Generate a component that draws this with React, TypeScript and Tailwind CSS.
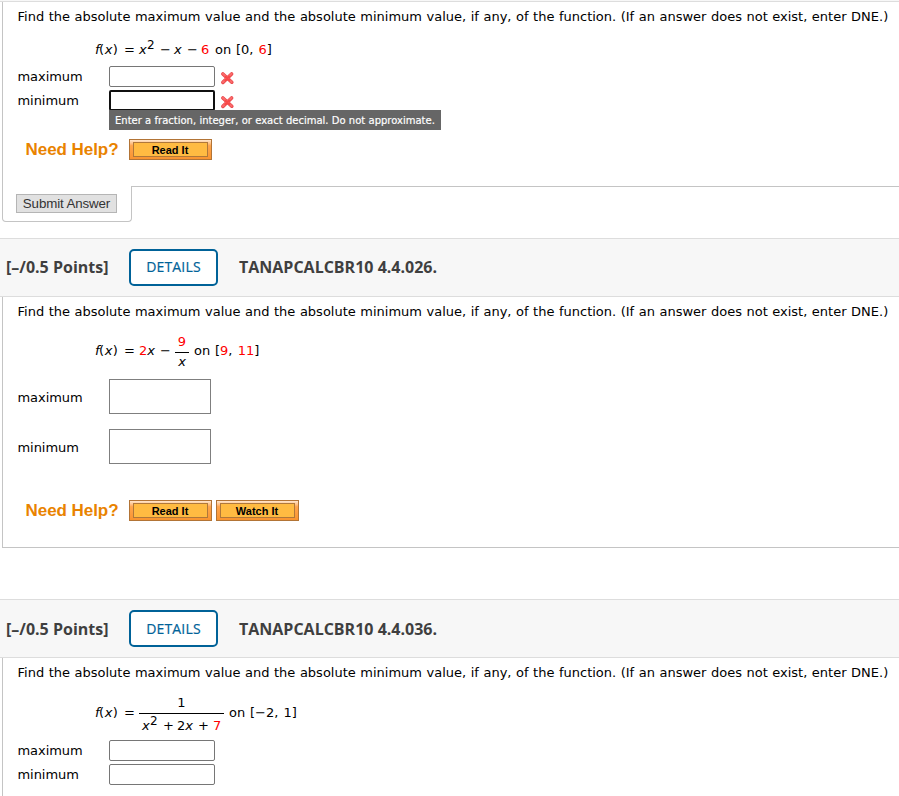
import type { ReactNode } from "react";

const VERDANA = "font-['Verdana','DejaVu_Sans',sans-serif]";

function Token({ w, children, className = "" }: { w: string; children: ReactNode; className?: string }) {
  return <span className={`block shrink-0 whitespace-pre ${w} ${className}`}>{children}</span>;
}

function Prompt() {
  return (
    <p className="ml-[0.5px] h-4 w-[872px] whitespace-nowrap text-[13px] leading-4 [word-spacing:0.4px]">
      Find the absolute maximum value and the absolute minimum value, if any, of the function. (If an answer does not
      exist, enter DNE.)
    </p>
  );
}

function FunctionOfX() {
  return (
    <>
      <Token w="w-[29px]">
        <i>f</i><span className="ml-[-0.5px]">(</span><i className="ml-[0.5px]">x</i><span className="ml-[0.5px]">)</span>
      </Token>
      <Token w="w-[15px]">=</Token>
    </>
  );
}

function Squared() {
  return (
    <>
      <Token w="w-[8px]"><i>x</i></Token>
      <Token w="w-[13px]" className="-mt-[5px] text-[12px]">2</Token>
    </>
  );
}

function Cross() {
  return (
    <svg className="ml-[5px] mt-1 h-[16px] w-[15px]" viewBox="0 0 15 16">
      <path d="M2.9 4 L11.8 12.2 M11.6 4 L2.9 12.4" stroke="#e8474b" strokeWidth="3.6" strokeLinecap="round" />
      <path d="M2.9 3.8 L11.6 12 M11.5 3.8 L2.9 12.2" stroke="#fb6a6a" strokeWidth="2.2" strokeLinecap="round" />
      <path d="M5.6 6.8 L9.2 10 M9.2 6.6 L5.4 10.2" stroke="#f84848" strokeWidth="2" strokeLinecap="round" />
    </svg>
  );
}

function AnswerRow({ label, active, wrong }: { label: string; active?: boolean; wrong?: boolean }) {
  return (
    <div className="relative flex h-6">
      <label className="w-[92px] pl-[0.5px] pt-[3px] text-[13px] leading-4 tracking-[-0.05px]">{label}</label>
      <input
        aria-label={label}
        className={`h-[21px] w-[106px] rounded-[2px] bg-white outline-none ${active ? "border-2 border-[#101010]" : "border border-[#767676]"}`}
      />
      {wrong && <Cross />}
      {active && (
        <div className="absolute left-[92px] top-5 h-5 w-[332px] whitespace-nowrap bg-[#666] pl-[6px] pt-px text-[10px] leading-5 text-white [-webkit-text-stroke:0.18px_white] [word-spacing:0.1px]">
          Enter a fraction, integer, or exact decimal. Do not approximate.
        </div>
      )}
    </div>
  );
}

function BoxRow({ label }: { label: string }) {
  return (
    <div className="flex h-[50px]">
      <label className="w-[92px] pl-[0.5px] pt-[11px] text-[13px] leading-4 tracking-[-0.05px]">{label}</label>
      <input aria-label={label} className="h-[35px] w-[102px] border border-[#7f7f7f] bg-white outline-none" />
    </div>
  );
}

function HelpButton({ children }: { children: ReactNode }) {
  return (
    <button className="h-[21px] w-[83px] border border-[#b27436] bg-linear-to-b from-[#ffe6cc] via-[#ffa54c] via-30% to-[#f9942f] p-[2px_3px] font-['Liberation_Sans',Arial,sans-serif] text-[11px] font-bold text-black">
      <span className="flex h-[15px] items-center justify-center border border-[#b0783a] bg-[#ffbb42] pr-px pt-[2px] leading-none">
        {children}
      </span>
    </button>
  );
}

function NeedHelp({ buttons }: { buttons: string[] }) {
  return (
    <div className="flex h-[21px] pl-2">
      <span className="w-[104px] whitespace-nowrap pl-[0.5px] font-['Liberation_Sans',Arial,sans-serif] text-[17px] font-bold leading-[21px] tracking-[-0.05px] text-[#e98300]">
        Need Help?
      </span>
      <div className="flex gap-1">
        {buttons.map((name) => (
          <HelpButton key={name}>{name}</HelpButton>
        ))}
      </div>
    </div>
  );
}

function Header({ code, raised }: { code: string; raised?: boolean }) {
  const shift = raised ? "pb-[2px]" : "";
  return (
    <header className="flex h-[59px] items-center border-y border-[#ddd] bg-[#f7f7f7] pl-1.5 font-['Open_Sans',sans-serif] text-[16px] font-bold text-[#3f3f3f]">
      <span className={`w-[123px] whitespace-nowrap ${shift}`}>[–/0.5 Points]</span>
      <button
        className={`h-[37px] w-[89px] rounded-[5px] border-2 border-[#006298] bg-white text-[14px] font-normal tracking-[0.15px] text-[#006298] [-webkit-text-stroke:0.2px_#006298] ${shift}`}
      >
        DETAILS
      </button>
      <span className={`ml-[21px] whitespace-nowrap ${shift}`}>{code}</span>
    </header>
  );
}

export default function App() {
  return (
    <main className={`h-[796px] w-[899px] overflow-hidden bg-white text-[13px] text-black ${VERDANA}`}>
      <div className="h-[2px] border-b border-[#ddd] bg-[#f7f7f7]" />
      <section className="flex h-[220px] flex-col">
        <div className="ml-[2px] h-[184px] border-l border-[#c4c4c4] pl-[14px] pt-[7px]">
          <Prompt />
          <div className="ml-[78px] mt-[17px] flex h-4 leading-4">
            <FunctionOfX />
            <Squared />
            <Token w="w-[14px]">−</Token>
            <Token w="w-[13px]"><i>x</i></Token>
            <Token w="w-[14px]">−</Token>
            <Token w="w-[14px]" className="text-[#f00]">6</Token>
            <Token w="w-[21px]">on</Token>
            <span className="whitespace-nowrap [word-spacing:0.8px]">[0, <span className="text-[#f00]">6</span>]</span>
          </div>
          <div className="mt-2">
            <AnswerRow label="maximum" wrong />
            <AnswerRow label="minimum" active wrong />
          </div>
          <div className="mt-[25px]">
            <NeedHelp buttons={["Read It"]} />
          </div>
        </div>
        <div className="flex h-9">
          <div className="ml-[2px] h-9 w-[130px] rounded-b-[4px] border border-t-0 border-[#c4c4c4] pl-[13px] pt-2">
            <button className="h-[19px] w-[101px] border border-[#b5b5b5] bg-[#e1e1e1] font-['Liberation_Sans',Arial,sans-serif] text-[13.33px] leading-[17px] tracking-[-0.12px] text-[#333]">
              Submit Answer
            </button>
          </div>
          <div className="-ml-px grow border-t border-[#c4c4c4]" />
        </div>
      </section>
      <div className="h-4" />
      <Header code="TANAPCALCBR10 4.4.026." raised />
      <section className="ml-[2px] h-[251px] border-b border-l border-[#c4c4c4] pl-[14px] pt-[7px]">
        <Prompt />
        <div className="ml-[78px] mt-[14px] flex h-[35px] leading-4">
          <div className="flex pt-[9px]">
            <FunctionOfX />
            <Token w="w-[21px]" className="text-[#f00]">2<i className="text-black">x</i></Token>
            <Token w="w-[15px]">−</Token>
          </div>
          <div className="mr-[5px] flex w-[14px] flex-col items-center">
            <span className="h-[18px] text-[#f00]">9</span>
            <span className="h-px w-[14px] bg-black" />
            <i className="h-4 pt-px">x</i>
          </div>
          <Token w="w-[21px]" className="pt-[9px]">on</Token>
          <span className="whitespace-nowrap pt-[9px] [word-spacing:1px]">[<span className="text-[#f00]">9</span>, <span className="text-[#f00]">11</span>]</span>
        </div>
        <div className="mt-[10px]">
          <BoxRow label="maximum" />
          <BoxRow label="minimum" />
        </div>
        <div className="mt-[21px]">
          <NeedHelp buttons={["Read It", "Watch It"]} />
        </div>
      </section>
      <div className="h-[51px]" />
      <Header code="TANAPCALCBR10 4.4.036." />
      <section className="ml-[2px] h-[138px] border-l border-[#c4c4c4] pl-[14px] pt-[7px]">
        <Prompt />
        <div className="ml-[78px] mt-[14px] flex h-[39px] leading-4">
          <div className="flex pt-[10px]"><FunctionOfX /></div>
          <div className="mr-[5px] flex w-[85px] flex-col items-center">
            <span className="h-[18px]">1</span>
            <span className="h-px w-full bg-black" />
            <div className="flex h-5 w-full pl-[3px] pt-[4px]">
              <Squared />
              <Token w="w-[14px]">+</Token>
              <Token w="w-[21px]">2<i>x</i></Token>
              <Token w="w-[15px]">+</Token>
              <Token w="w-[9px]" className="text-[#f00]">7</Token>
            </div>
          </div>
          <Token w="w-[21px]" className="pt-[10px]">on</Token>
          <span className="whitespace-nowrap pt-[10px] [word-spacing:1px]">[−2, 1]</span>
        </div>
        <div className="mt-[6px]">
          <AnswerRow label="maximum" />
          <AnswerRow label="minimum" />
        </div>
      </section>
    </main>
  );
}
